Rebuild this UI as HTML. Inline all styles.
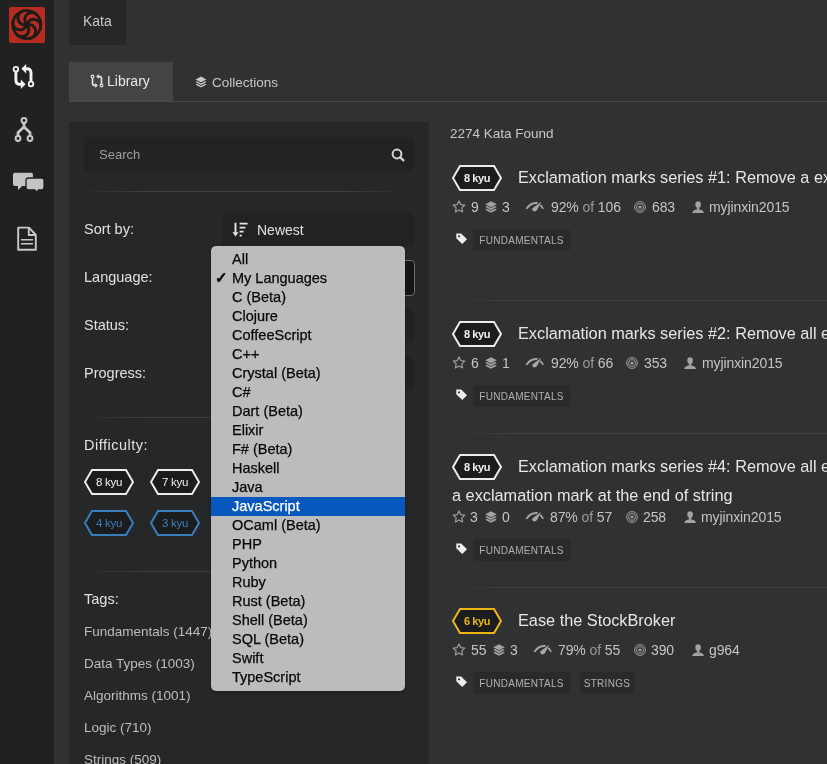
<!DOCTYPE html>
<html><head><meta charset="utf-8">
<style>
*{margin:0;padding:0;box-sizing:border-box}
html,body{width:827px;height:764px;overflow:hidden;background:#303133;font-family:"Liberation Sans",sans-serif;color:#d0d0d0}
.a{position:absolute}
body>*{will-change:transform}
.t{position:absolute;white-space:nowrap;line-height:1}
#side{left:0;top:0;width:54px;height:764px;background:#212121}
#katatab{left:69px;top:0;width:57px;height:45px;background:#262729}
#tabline{left:69px;top:101px;width:758px;height:1px;background:#48494b}
#libtab{left:69px;top:62px;width:104px;height:39px;background:#434446}
#panel{left:69px;top:122px;width:360px;height:660px;background:#262729}
.inp{position:absolute;background:#212224;border-radius:4px}
.hr{position:absolute;height:1px;background:linear-gradient(to right,rgba(70,70,72,0),#3f4042 20%,#3f4042 80%,rgba(70,70,72,0))}
.lbl{position:absolute;white-space:nowrap;line-height:1;font-size:14.5px;color:#e0e0e0}
.tag{position:absolute;white-space:nowrap;line-height:1;font-size:13.5px;color:#bdbdbd}
.st{position:absolute;white-space:nowrap;line-height:1;font-size:14px;color:#c4c4c4;letter-spacing:-0.1px}
.of{color:#9a9a9a}
.ttl{position:absolute;white-space:nowrap;line-height:1;font-size:16.3px;color:#e6e6e6}
.pill{position:absolute;height:22px;background:#292a2c;border-radius:3px;font-size:10px;color:#b0b0b0;line-height:24px;text-align:center;letter-spacing:0.3px}
.dv{position:absolute;left:430px;width:397px;height:1px;background:linear-gradient(to right,rgba(64,65,67,0) 5%,#404143 20%,#404143)}
.ddi{position:absolute;left:232px;height:19px;line-height:19px;font-size:14.5px;color:#080808;white-space:nowrap;-webkit-text-stroke:0.25px currentColor}
</style></head><body>
<svg width="0" height="0" style="position:absolute">
<defs>
<symbol id="star" viewBox="0 0 14 13"><path d="M7 0.9 L8.75 4.6 L12.8 5.1 L9.8 7.9 L10.6 11.9 L7 9.9 L3.4 11.9 L4.2 7.9 L1.2 5.1 L5.25 4.6 Z" fill="none" stroke="#a0a0a0" stroke-width="1.15" stroke-linejoin="round"/></symbol>
<symbol id="layers" viewBox="0 0 12 12"><path d="M6 0.3 L11.8 3.3 L6 6.3 L0.2 3.3 Z" fill="#a3a3a3"/><path d="M0.2 6 L2.1 5 L6 7.1 L9.9 5 L11.8 6 L6 9 Z" fill="#a3a3a3"/><path d="M0.2 8.7 L2.1 7.7 L6 9.8 L9.9 7.7 L11.8 8.7 L6 11.7 Z" fill="#a3a3a3"/></symbol>
<symbol id="gauge" viewBox="0 0 30 20"><path d="M3.8 12.2 Q8 5 16 6 L15 7.9 Q9 7.8 5.4 13.1 Q4 13.6 3.8 12.2 Z" fill="#a5a5a5"/><path d="M19.2 5.8 L15.2 13.8 Q13.5 16.2 11 15 Q9.5 13.5 10.5 12.2 Z" fill="#a5a5a5"/><path d="M17.6 9.6 L18.8 8.2 Q21.3 10.2 22 12.8 L20.4 13 Z" fill="#a5a5a5"/></symbol>
<symbol id="target" viewBox="0 0 12 12"><circle cx="6" cy="6" r="5.4" fill="none" stroke="#a0a0a0" stroke-width="1"/><circle cx="6" cy="6" r="3.5" fill="none" stroke="#a0a0a0" stroke-width="1"/><circle cx="6" cy="6" r="1.6" fill="#a0a0a0"/></symbol>
<symbol id="user" viewBox="-0.5 -0.5 12 12"><ellipse cx="5.6" cy="2.9" rx="2.8" ry="3.2" fill="#a3a3a3"/><rect x="4.4" y="5" width="2.4" height="3.2" fill="#a3a3a3"/><path d="M-0.2 11.4 Q0 8.5 4 7.9 L7.2 7.9 Q11.2 8.5 11.4 11.4 Q5.6 12.1 -0.2 11.4 Z" fill="#a3a3a3"/></symbol>
<symbol id="tagi" viewBox="0 0 12 12"><path d="M0.3 0.6 L5.2 0.6 L11 6.3 L6.2 11.1 L0.3 5.3 Z M3 2.2 A1.1 1.1 0 1 0 3.01 2.2 Z" fill="#eeeeee" fill-rule="evenodd"/></symbol>
<symbol id="layers2" viewBox="0 0 12 12"><path d="M6 0.5 L11.5 3.4 L6 6.3 L0.5 3.4 Z" fill="#c8c8c8"/><path d="M0.5 6.1 L2 5.3 L6 7.5 L10 5.3 L11.5 6.1 L6 9.1 Z" fill="#c8c8c8"/><path d="M0.5 8.6 L2 7.8 L6 10 L10 7.8 L11.5 8.6 L6 11.6 Z" fill="#c8c8c8"/></symbol></defs></svg>
<div id="side" class="a"></div>
<svg class="a" style="left:0;top:0" width="54" height="260" viewBox="0 0 54 260">
<rect x="9" y="7" width="36" height="36" rx="2" fill="#b52d20"/>
<g transform="translate(26.8,24.6)" fill="none" stroke="#1d1a18" stroke-width="2.9" stroke-linecap="round"><circle r="14.1" stroke-width="2.7"/><path d="M0 0 A7.1 7.1 0 0 1 14.2 0" transform="rotate(15)"/><path d="M0 0 A7.1 7.1 0 0 1 14.2 0" transform="rotate(75)"/><path d="M0 0 A7.1 7.1 0 0 1 14.2 0" transform="rotate(135)"/><path d="M0 0 A7.1 7.1 0 0 1 14.2 0" transform="rotate(195)"/><path d="M0 0 A7.1 7.1 0 0 1 14.2 0" transform="rotate(255)"/><path d="M0 0 A7.1 7.1 0 0 1 14.2 0" transform="rotate(315)"/></g>
<g fill="none" stroke="#f4f4f4" stroke-width="2.9">
<circle cx="15.9" cy="69.2" r="2.3" stroke-width="1.8"/>
<circle cx="31" cy="84" r="2.3" stroke-width="1.8"/>
<path d="M15.9 71.6 L15.9 80 Q15.9 84.3 20 84.3 L22 84.3"/>
<path d="M31 81.6 L31 73 Q31 68.7 27 68.7 L25 68.7"/>
</g>
<path d="M20.8 79.6 L25.6 84.3 L20.8 89 Z" fill="#f4f4f4"/>
<path d="M26.2 64 L21.4 68.7 L26.2 73.4 Z" fill="#f4f4f4"/>
<g fill="none" stroke="#c8c8c8" stroke-width="2.8">
<circle cx="24" cy="120.5" r="2.4" stroke-width="2"/>
<circle cx="18" cy="138.5" r="2.4" stroke-width="2"/>
<circle cx="30" cy="138.5" r="2.4" stroke-width="2"/>
<path d="M24 122.8 L24 127 L18 132.5 L18 136.2"/>
<path d="M24 127 L30 132.5 L30 136.2"/>
</g>
<path d="M15 172.8 L31 172.8 Q33 172.8 33 174.8 L33 184 Q33 186 31 186 L22 186 L18.4 190 L17.7 186 L15 186 Q13 186 13 184 L13 174.8 Q13 172.8 15 172.8 Z" fill="#c4c4c4"/>
<path d="M28.3 178 L41.7 178 Q44 178 44 180.3 L44 187.3 Q44 189.8 41.7 189.8 L38.3 189.8 L37.6 192.4 L34.6 189.8 L28.3 189.8 Q26 189.8 26 187.3 L26 180.3 Q26 178 28.3 178 Z" fill="#c4c4c4" stroke="#212121" stroke-width="1.3"/>
<g fill="none" stroke="#c8c8c8" stroke-width="1.9" stroke-linejoin="round">
<path d="M18.2 227.6 L29 227.6 L35.8 235 L35.8 249.7 L18.2 249.7 Z"/>
<path d="M28.8 227.6 L28.8 235 L35.8 235"/>
</g>
<path d="M21 239.7 L33 239.7 M21 243.7 L33 243.7" stroke="#c8c8c8" stroke-width="1.6"/>
</svg>
<div id="katatab" class="a"></div>
<div class="t" style="left:83px;top:14px;font-size:14px;color:#c6c6c6">Kata</div>
<div id="libtab" class="a"></div>
<div id="tabline" class="a"></div>
<svg class="a" style="left:90px;top:74px" width="14" height="14" viewBox="0 0 14 14">
<g fill="none" stroke="#e6e6e6" stroke-width="1.6"><circle cx="2.5" cy="2.5" r="1.4" stroke-width="1.1"/><circle cx="11.5" cy="11.5" r="1.4" stroke-width="1.1"/>
<path d="M2.5 4 L2.5 9.3 Q2.5 11.4 4.5 11.4 L5.5 11.4"/><path d="M11.5 10 L11.5 4.7 Q11.5 2.6 9.5 2.6 L8.5 2.6"/></g>
<path d="M5.2 8.9 L7.8 11.4 L5.2 13.9 Z M8.8 0.1 L6.2 2.6 L8.8 5.1 Z" fill="#e6e6e6"/></svg>
<svg class="a" style="left:195px;top:76px" width="12" height="12" viewBox="0 0 12 12"><use href="#layers2"/></svg>
<div class="t" style="left:107px;top:74px;font-size:14px;color:#e6e6e6">Library</div>
<div class="t" style="left:212px;top:76px;font-size:13.5px;color:#c8c8c8">Collections</div>

<div id="panel" class="a"></div>
<div class="inp" style="left:84px;top:137px;width:330px;height:34px"></div>
<div class="t" style="left:99px;top:148px;font-size:13px;color:#9d9d9d">Search</div>
<div class="hr" style="left:78px;top:191px;width:330px"></div>

<div class="lbl" style="left:84px;top:222px">Sort by:</div>
<div class="lbl" style="left:84px;top:270px">Language:</div>
<div class="lbl" style="left:84px;top:318px">Status:</div>
<div class="lbl" style="left:84px;top:366px">Progress:</div>
<div class="inp" style="left:222px;top:213px;width:192px;height:34px"></div>
<svg class="a" style="left:390px;top:147px" width="16" height="16" viewBox="0 0 16 16"><circle cx="7" cy="7" r="4.4" fill="none" stroke="#d6d6d6" stroke-width="2"/><path d="M10.2 10.2 L13.4 13.4" stroke="#d6d6d6" stroke-width="2.2" stroke-linecap="round"/></svg>
<svg class="a" style="left:232px;top:222px" width="17" height="16" viewBox="0 0 17 16"><path d="M3.5 0.8 L3.5 12" stroke="#e6e6e6" stroke-width="1.9"/><path d="M0.5 10.2 L3.5 14.4 L6.5 10.2 Z" fill="#e6e6e6"/><path d="M7.6 1.6 L15.6 1.6 M7.6 5.6 L13.4 5.6 M7.6 9.6 L11.6 9.6 M7.6 13.6 L9.8 13.6" stroke="#e6e6e6" stroke-width="1.7"/></svg>
<div class="t" style="left:257px;top:223px;font-size:14px;color:#e0e0e0">Newest</div>
<div class="a" style="left:222px;top:260px;width:193px;height:36px;background:#151716;border:1px solid #6f6f6f;border-radius:4px"></div>
<div class="inp" style="left:222px;top:309px;width:192px;height:34px"></div>
<div class="inp" style="left:222px;top:357px;width:192px;height:34px"></div>

<div class="hr" style="left:78px;top:417px;width:330px"></div>
<div class="lbl" style="left:84px;top:438px;letter-spacing:0.5px">Difficulty:</div>

<svg class="a" style="left:84px;top:469px" width="50" height="26" viewBox="0 0 50 26"><path d="M8 1 L42 1 L49 13 L42 25 L8 25 L1 13 Z" fill="#1b1c1d" stroke="#ececec" stroke-width="2" stroke-linejoin="miter"/><text x="25" y="17.3" text-anchor="middle" font-family="Liberation Sans" font-size="11.5" fill="#f0f0f0" letter-spacing="-0.3">8 kyu</text></svg>
<svg class="a" style="left:150px;top:469px" width="50" height="26" viewBox="0 0 50 26"><path d="M8 1 L42 1 L49 13 L42 25 L8 25 L1 13 Z" fill="#1b1c1d" stroke="#ececec" stroke-width="2" stroke-linejoin="miter"/><text x="25" y="17.3" text-anchor="middle" font-family="Liberation Sans" font-size="11.5" fill="#f0f0f0" letter-spacing="-0.3">7 kyu</text></svg>
<svg class="a" style="left:84px;top:510px" width="50" height="26" viewBox="0 0 50 26"><path d="M8 1 L42 1 L49 13 L42 25 L8 25 L1 13 Z" fill="#1b1c1d" stroke="#3c7ebb" stroke-width="2" stroke-linejoin="miter"/><text x="25" y="17.3" text-anchor="middle" font-family="Liberation Sans" font-size="11.5" fill="#3c7ebb" letter-spacing="-0.3">4 kyu</text></svg>
<svg class="a" style="left:150px;top:510px" width="50" height="26" viewBox="0 0 50 26"><path d="M8 1 L42 1 L49 13 L42 25 L8 25 L1 13 Z" fill="#1b1c1d" stroke="#3c7ebb" stroke-width="2" stroke-linejoin="miter"/><text x="25" y="17.3" text-anchor="middle" font-family="Liberation Sans" font-size="11.5" fill="#3c7ebb" letter-spacing="-0.3">3 kyu</text></svg>
<div class="hr" style="left:78px;top:571px;width:330px"></div>
<div class="lbl" style="left:84px;top:592px">Tags:</div>
<div class="tag" style="left:84px;top:625px">Fundamentals (1447)</div>
<div class="tag" style="left:84px;top:657px">Data Types (1003)</div>
<div class="tag" style="left:84px;top:689px">Algorithms (1001)</div>
<div class="tag" style="left:84px;top:721px">Logic (710)</div>
<div class="tag" style="left:84px;top:753px">Strings (509)</div>

<div class="t" style="left:450px;top:127px;font-size:13.5px;color:#c8c8c8">2274 Kata Found</div>

<svg class="a" style="left:452px;top:165px" width="50" height="26" viewBox="0 0 50 26"><path d="M8 1 L42 1 L49 13 L42 25 L8 25 L1 13 Z" fill="#1b1c1d" stroke="#ececec" stroke-width="2" stroke-linejoin="miter"/><text x="25" y="17.3" text-anchor="middle" font-family="Liberation Sans" font-weight="bold" font-size="11" fill="#f0f0f0" letter-spacing="-0.45">8 kyu</text></svg>
<div class="ttl" style="left:518px;top:169px">Exclamation marks series #1: Remove a exclamation mark from the end of string</div>
<svg class="a" style="left:452px;top:200px" width="14" height="13"><use href="#star"/></svg>
<div class="st" style="left:471px;top:200px">9</div>
<svg class="a" style="left:485px;top:201px" width="12" height="12"><use href="#layers"/></svg>
<div class="st" style="left:502px;top:200px">3</div>
<svg class="a" style="left:522px;top:196px" width="30" height="20"><use href="#gauge"/></svg>
<div class="st" style="left:551px;top:200px">92% <span class="of">of</span> 106</div>
<svg class="a" style="left:634px;top:201px" width="12" height="12"><use href="#target"/></svg>
<div class="st" style="left:652px;top:200px">683</div>
<svg class="a" style="left:692px;top:201px" width="12" height="12"><use href="#user"/></svg>
<div class="st" style="left:709px;top:200px">myjinxin2015</div>
<svg class="a" style="left:456px;top:233px" width="12" height="12"><use href="#tagi"/></svg>
<div class="pill" style="left:473px;top:229px;width:97px">FUNDAMENTALS</div>
<div class="dv" style="top:300px"></div>
<svg class="a" style="left:452px;top:321px" width="50" height="26" viewBox="0 0 50 26"><path d="M8 1 L42 1 L49 13 L42 25 L8 25 L1 13 Z" fill="#1b1c1d" stroke="#ececec" stroke-width="2" stroke-linejoin="miter"/><text x="25" y="17.3" text-anchor="middle" font-family="Liberation Sans" font-weight="bold" font-size="11" fill="#f0f0f0" letter-spacing="-0.45">8 kyu</text></svg>
<div class="ttl" style="left:518px;top:325px">Exclamation marks series #2: Remove all exclamation marks from the end of sentence</div>
<svg class="a" style="left:452px;top:356px" width="14" height="13"><use href="#star"/></svg>
<div class="st" style="left:471px;top:356px">6</div>
<svg class="a" style="left:485px;top:357px" width="12" height="12"><use href="#layers"/></svg>
<div class="st" style="left:502px;top:356px">1</div>
<svg class="a" style="left:522px;top:352px" width="30" height="20"><use href="#gauge"/></svg>
<div class="st" style="left:551px;top:356px">92% <span class="of">of</span> 66</div>
<svg class="a" style="left:626px;top:357px" width="12" height="12"><use href="#target"/></svg>
<div class="st" style="left:644px;top:356px">353</div>
<svg class="a" style="left:684px;top:357px" width="12" height="12"><use href="#user"/></svg>
<div class="st" style="left:702px;top:356px">myjinxin2015</div>
<svg class="a" style="left:456px;top:389px" width="12" height="12"><use href="#tagi"/></svg>
<div class="pill" style="left:473px;top:385px;width:97px">FUNDAMENTALS</div>
<div class="dv" style="top:433px"></div>
<svg class="a" style="left:452px;top:454px" width="50" height="26" viewBox="0 0 50 26"><path d="M8 1 L42 1 L49 13 L42 25 L8 25 L1 13 Z" fill="#1b1c1d" stroke="#ececec" stroke-width="2" stroke-linejoin="miter"/><text x="25" y="17.3" text-anchor="middle" font-family="Liberation Sans" font-weight="bold" font-size="11" fill="#f0f0f0" letter-spacing="-0.45">8 kyu</text></svg>
<div class="ttl" style="left:518px;top:458px">Exclamation marks series #4: Remove all exclamation marks from sentence but ensure</div>
<div class="ttl" style="left:452px;top:487px">a exclamation mark at the end of string</div>
<svg class="a" style="left:452px;top:510px" width="14" height="13"><use href="#star"/></svg>
<div class="st" style="left:470px;top:510px">3</div>
<svg class="a" style="left:485px;top:511px" width="12" height="12"><use href="#layers"/></svg>
<div class="st" style="left:502px;top:510px">0</div>
<svg class="a" style="left:522px;top:506px" width="30" height="20"><use href="#gauge"/></svg>
<div class="st" style="left:550px;top:510px">87% <span class="of">of</span> 57</div>
<svg class="a" style="left:626px;top:511px" width="12" height="12"><use href="#target"/></svg>
<div class="st" style="left:643px;top:510px">258</div>
<svg class="a" style="left:684px;top:511px" width="12" height="12"><use href="#user"/></svg>
<div class="st" style="left:701px;top:510px">myjinxin2015</div>
<svg class="a" style="left:456px;top:543px" width="12" height="12"><use href="#tagi"/></svg>
<div class="pill" style="left:473px;top:539px;width:97px">FUNDAMENTALS</div>
<div class="dv" style="top:587px"></div>
<svg class="a" style="left:452px;top:608px" width="50" height="26" viewBox="0 0 50 26"><path d="M8 1 L42 1 L49 13 L42 25 L8 25 L1 13 Z" fill="#1b1c1d" stroke="#ecb613" stroke-width="2" stroke-linejoin="miter"/><text x="25" y="17.3" text-anchor="middle" font-family="Liberation Sans" font-weight="bold" font-size="11" fill="#ecb613" letter-spacing="-0.45">6 kyu</text></svg>
<div class="ttl" style="left:518px;top:612px">Ease the StockBroker</div>
<svg class="a" style="left:452px;top:643px" width="14" height="13"><use href="#star"/></svg>
<div class="st" style="left:471px;top:643px">55</div>
<svg class="a" style="left:493px;top:644px" width="12" height="12"><use href="#layers"/></svg>
<div class="st" style="left:510px;top:643px">3</div>
<svg class="a" style="left:530px;top:639px" width="30" height="20"><use href="#gauge"/></svg>
<div class="st" style="left:558px;top:643px">79% <span class="of">of</span> 55</div>
<svg class="a" style="left:634px;top:644px" width="12" height="12"><use href="#target"/></svg>
<div class="st" style="left:651px;top:643px">390</div>
<svg class="a" style="left:692px;top:644px" width="12" height="12"><use href="#user"/></svg>
<div class="st" style="left:709px;top:643px">g964</div>
<svg class="a" style="left:456px;top:676px" width="12" height="12"><use href="#tagi"/></svg>
<div class="pill" style="left:473px;top:672px;width:97px">FUNDAMENTALS</div>
<div class="pill" style="left:580px;top:672px;width:54px">STRINGS</div>
<div class="a" id="dd" style="left:211px;top:246px;width:194px;height:445px;background:#bcbcbc;border-radius:5px;box-shadow:0 1px 3px rgba(0,0,0,0.35)"></div>
<div class="ddi" style="top:250px">All</div>
<div class="ddi" style="top:269px">My Languages</div>
<div class="ddi" style="top:288px">C (Beta)</div>
<div class="ddi" style="top:307px">Clojure</div>
<div class="ddi" style="top:326px">CoffeeScript</div>
<div class="ddi" style="top:345px">C++</div>
<div class="ddi" style="top:364px">Crystal (Beta)</div>
<div class="ddi" style="top:383px">C#</div>
<div class="ddi" style="top:402px">Dart (Beta)</div>
<div class="ddi" style="top:421px">Elixir</div>
<div class="ddi" style="top:440px">F# (Beta)</div>
<div class="ddi" style="top:459px">Haskell</div>
<div class="ddi" style="top:478px">Java</div>
<div class="a" style="left:211px;top:497px;width:194px;height:19px;background:#0657be"></div>
<div class="ddi" style="top:497px;color:#fff">JavaScript</div>
<div class="ddi" style="top:516px">OCaml (Beta)</div>
<div class="ddi" style="top:535px">PHP</div>
<div class="ddi" style="top:554px">Python</div>
<div class="ddi" style="top:573px">Ruby</div>
<div class="ddi" style="top:592px">Rust (Beta)</div>
<div class="ddi" style="top:611px">Shell (Beta)</div>
<div class="ddi" style="top:630px">SQL (Beta)</div>
<div class="ddi" style="top:649px">Swift</div>
<div class="ddi" style="top:668px">TypeScript</div>
<div class="ddi" style="top:269px;left:215px;font-weight:bold">&#10003;</div>
</body></html>
